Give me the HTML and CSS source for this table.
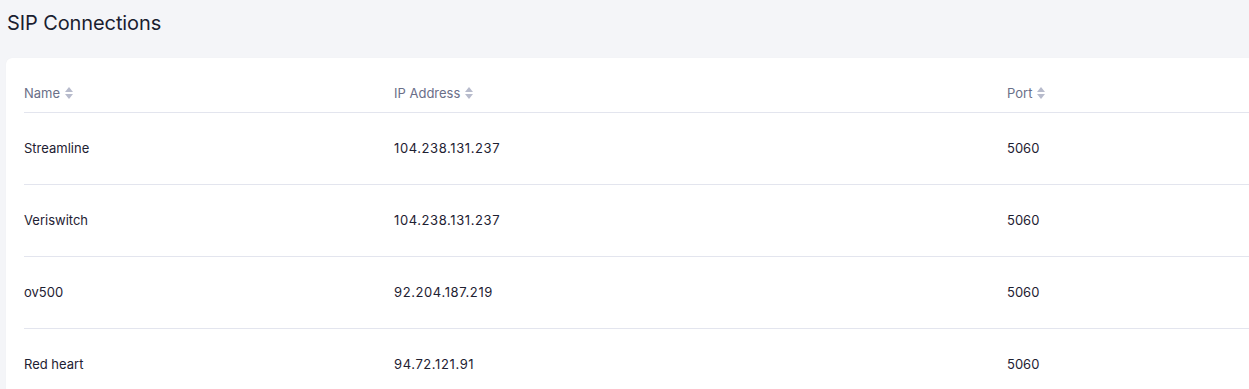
FILE: index.html
```html
<!DOCTYPE html>
<html lang="en">
<head>
<meta charset="utf-8">
<title>SIP Connections</title>
<link rel="stylesheet" href="styles.css">
</head>
<body>
<div class="page">
  <h1 class="title">SIP Connections</h1>
  <div class="card">
    <table class="table">
      <colgroup>
        <col class="col-name">
        <col class="col-ip">
        <col class="col-port">
      </colgroup>
      <thead>
        <tr>
          <th><span class="th-label">Name</span><span class="sort"><span class="up"></span><span class="down"></span></span></th>
          <th><span class="th-label">IP Address</span><span class="sort"><span class="up"></span><span class="down"></span></span></th>
          <th><span class="th-label">Port</span><span class="sort"><span class="up"></span><span class="down"></span></span></th>
        </tr>
      </thead>
      <tbody>
        <tr><td>Streamline</td><td class="ip">104.238.131.237</td><td>5060</td></tr>
        <tr><td>Veriswitch</td><td class="ip">104.238.131.237</td><td>5060</td></tr>
        <tr><td>ov500</td><td class="ip">92.204.187.219</td><td>5060</td></tr>
        <tr><td>Red heart</td><td class="ip">94.72.121.91</td><td>5060</td></tr>
      </tbody>
    </table>
  </div>
</div>
</body>
</html>
```
FILE: styles.css
```css
html, body {
  margin: 0;
  padding: 0;
  background: #f4f5f8;
  overflow: hidden;
}
body {
  font-family: Inter, "Noto Sans", sans-serif;
  color: #1e2132;
}
.page {
  padding-left: 6px;
}
.title {
  margin: 0;
  padding: 11px 0 0 1px;
  font-size: 20px;
  line-height: 24px;
  font-weight: 400;
  color: #1b1e30;
  letter-spacing: -0.1px;
}
.card {
  margin-top: 23px;
  margin-right: -40px;
  background: #ffffff;
  border-radius: 6px;
  padding-left: 18px;
  box-shadow: 0 0 1px rgba(30, 35, 60, 0.06);
}
.table {
  width: 100%;
  border-collapse: collapse;
  table-layout: fixed;
}
.col-name { width: 370px; }
.col-ip { width: 613px; }
.table th {
  text-align: left;
  font-weight: 400;
  font-size: 13px;
  line-height: 20px;
  color: #6a6f88;
  padding: 24px 0 9px 0;
  border-bottom: 1px solid #e3e5ee;
}
.th-label {
  vertical-align: middle;
}
.sort {
  display: inline-flex;
  flex-direction: column;
  gap: 2px;
  margin-left: 5px;
  vertical-align: middle;
}
.up, .down {
  width: 0;
  height: 0;
  border-left: 4px solid transparent;
  border-right: 4px solid transparent;
}
.up { border-bottom: 5px solid #b7bbcc; }
.down { border-top: 5px solid #b7bbcc; }
.table td {
  font-size: 13px;
  line-height: 20px;
  color: #1e2132;
  height: 69px;
  padding: 0 0 2px 0;
  border-bottom: 1px solid #e3e5ee;
  vertical-align: middle;
}
.table td.ip {
  letter-spacing: 0.6px;
}
```
